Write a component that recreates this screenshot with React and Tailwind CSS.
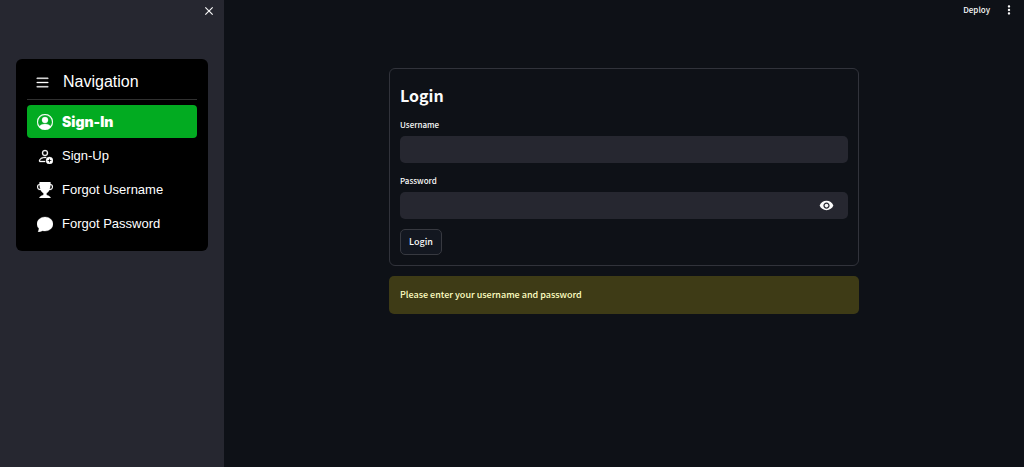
import React, { useState } from "react";
import {
  BsList,
  BsPersonCircle,
  BsPersonAdd,
  BsTrophyFill,
  BsChatFill,
} from "react-icons/bs";
import { MdClose, MdMoreVert, MdVisibility } from "react-icons/md";

const items = [
  { label: "Sign-In", Icon: BsPersonCircle },
  { label: "Sign-Up", Icon: BsPersonAdd },
  { label: "Forgot Username", Icon: BsTrophyFill },
  { label: "Forgot Password", Icon: BsChatFill },
];

function Sidebar() {
  const [active, setActive] = useState("Sign-In");
  return (
    <aside className="w-56 shrink-0 bg-[#262730] px-4">
      <div className="-mr-2 flex h-[59px] items-start justify-end pt-1">
        <button type="button" aria-label="Close sidebar" className="text-[#fafafa]">
          <MdClose className="size-3.5" />
        </button>
      </div>
      <nav
        aria-label="Navigation"
        className="rounded-md bg-black px-[11px] pt-1.5 pb-[11px] font-['Liberation_Sans',Arial,sans-serif] text-white"
      >
        <div className="flex h-[35px] items-center gap-3 border-b border-[#303030] pl-[7px] text-base">
          <BsList className="size-[17px]" strokeWidth={0.3} />
          <span>Navigation</span>
        </div>
        <ul className="mt-[5px] space-y-px">
          {items.map(({ label, Icon }) => (
            <li key={label}>
              <a
                href="#"
                aria-current={label === active ? "page" : undefined}
                onClick={(e) => {
                  e.preventDefault();
                  setActive(label);
                }}
                className={
                  label === active
                    ? "flex h-[33px] items-center gap-[9px] rounded bg-[#02ab21] px-2.5 font-['Inter',sans-serif] text-sm font-black"
                    : "flex h-[33px] items-center gap-[9px] rounded px-2.5 text-[13px]"
                }
              >
                <Icon className="size-4 shrink-0" strokeWidth={0.3} />
                {label}
              </a>
            </li>
          ))}
        </ul>
      </nav>
    </aside>
  );
}

function Field({ id, label, type, children }) {
  return (
    <div>
      <label htmlFor={id} className="block text-[8px] leading-4 font-medium">
        {label}
      </label>
      <div className="mt-[3px] flex h-[27px] items-center rounded-[5px] bg-[#262730]">
        <input
          id={id}
          type={type}
          className="h-full min-w-0 flex-1 bg-transparent px-2 text-[10px] outline-none"
        />
        {children}
      </div>
    </div>
  );
}

export default function App() {
  const [shown, setShown] = useState(false);
  return (
    <div className="flex min-h-screen bg-[#0e1117] font-['Noto_Sans_CJK_SC','Noto_Sans',sans-serif] text-[#fafafa]">
      <Sidebar />
      <div className="flex min-w-0 flex-1 flex-col">
        <header className="flex h-5 items-center justify-end gap-3 pr-2 text-[8px] font-medium">
          <button type="button">Deploy</button>
          <button type="button" aria-label="More options">
            <MdMoreVert className="size-3.5" />
          </button>
        </header>
        <main className="mx-auto mt-12 w-full max-w-[470px]">
          <form
            onSubmit={(e) => e.preventDefault()}
            className="rounded-md border border-[#31333b] px-2.5 pt-[13px] pb-2.5"
          >
            <h1 className="text-base leading-[26px] font-bold">Login</h1>
            <div className="mt-[9px] space-y-2.5">
              <Field id="username" label="Username" type="text" />
              <Field id="password" label="Password" type={shown ? "text" : "password"}>
                <button
                  type="button"
                  aria-label="Show password"
                  onClick={() => setShown(!shown)}
                  className="mr-3.5"
                >
                  <MdVisibility className="size-[15px]" />
                </button>
              </Field>
              <button
                type="submit"
                className="flex h-[26px] items-center rounded-[5px] border border-[#373940] bg-[#131720] px-2 text-[9px] font-medium"
              >
                Login
              </button>
            </div>
          </form>
          <div
            role="alert"
            className="mt-2.5 flex h-[38px] items-center rounded-[5px] bg-[#3e3b16] px-[11px] text-[9px] font-medium text-[#ffffc2]"
          >
            Please enter your username and password
          </div>
        </main>
      </div>
    </div>
  );
}
